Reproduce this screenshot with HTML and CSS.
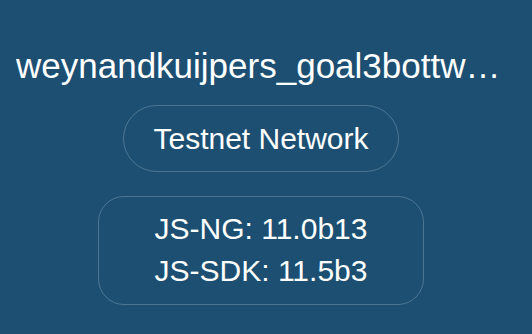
FILE: index.html
```html
<!DOCTYPE html>
<html>
<head>
<meta charset="utf-8">
<link rel="stylesheet" href="styles.css">
</head>
<body>
<div class="panel">
  <div class="title">weynandkuijpers_goal3bottwin.3bot</div>
  <div class="pill">Testnet Network</div>
  <div class="versions">
    <div class="line">JS-NG: 11.0b13</div>
    <div class="line">JS-SDK: 11.5b3</div>
  </div>
</div>
</body>
</html>
```
FILE: styles.css
```css
html, body {
  margin: 0;
  padding: 0;
  background: #1c4f72;
  width: 532px;
  height: 334px;
  overflow: hidden;
}
.panel {
  width: 490px;
  margin-left: 16px;
  padding-top: 46px;
  display: flex;
  flex-direction: column;
  align-items: center;
  font-family: "Liberation Sans", Arial, sans-serif;
  color: #ffffff;
}
.title {
  align-self: stretch;
  font-size: 35px;
  line-height: 40px;
  white-space: nowrap;
  overflow: hidden;
  text-overflow: ellipsis;
}
.pill {
  margin-top: 19px;
  width: 276px;
  height: 67px;
  box-sizing: border-box;
  border: 1px solid rgba(255,255,255,0.22);
  border-radius: 34px;
  display: flex;
  align-items: center;
  justify-content: center;
  font-size: 30px;
}
.versions {
  margin-top: 24px;
  width: 326px;
  height: 109px;
  box-sizing: border-box;
  border: 1px solid rgba(255,255,255,0.22);
  border-radius: 26px;
  display: flex;
  flex-direction: column;
  align-items: center;
  justify-content: center;
  padding-bottom: 2px;
  font-size: 30px;
}
.line {
  line-height: 42px;
}
```
